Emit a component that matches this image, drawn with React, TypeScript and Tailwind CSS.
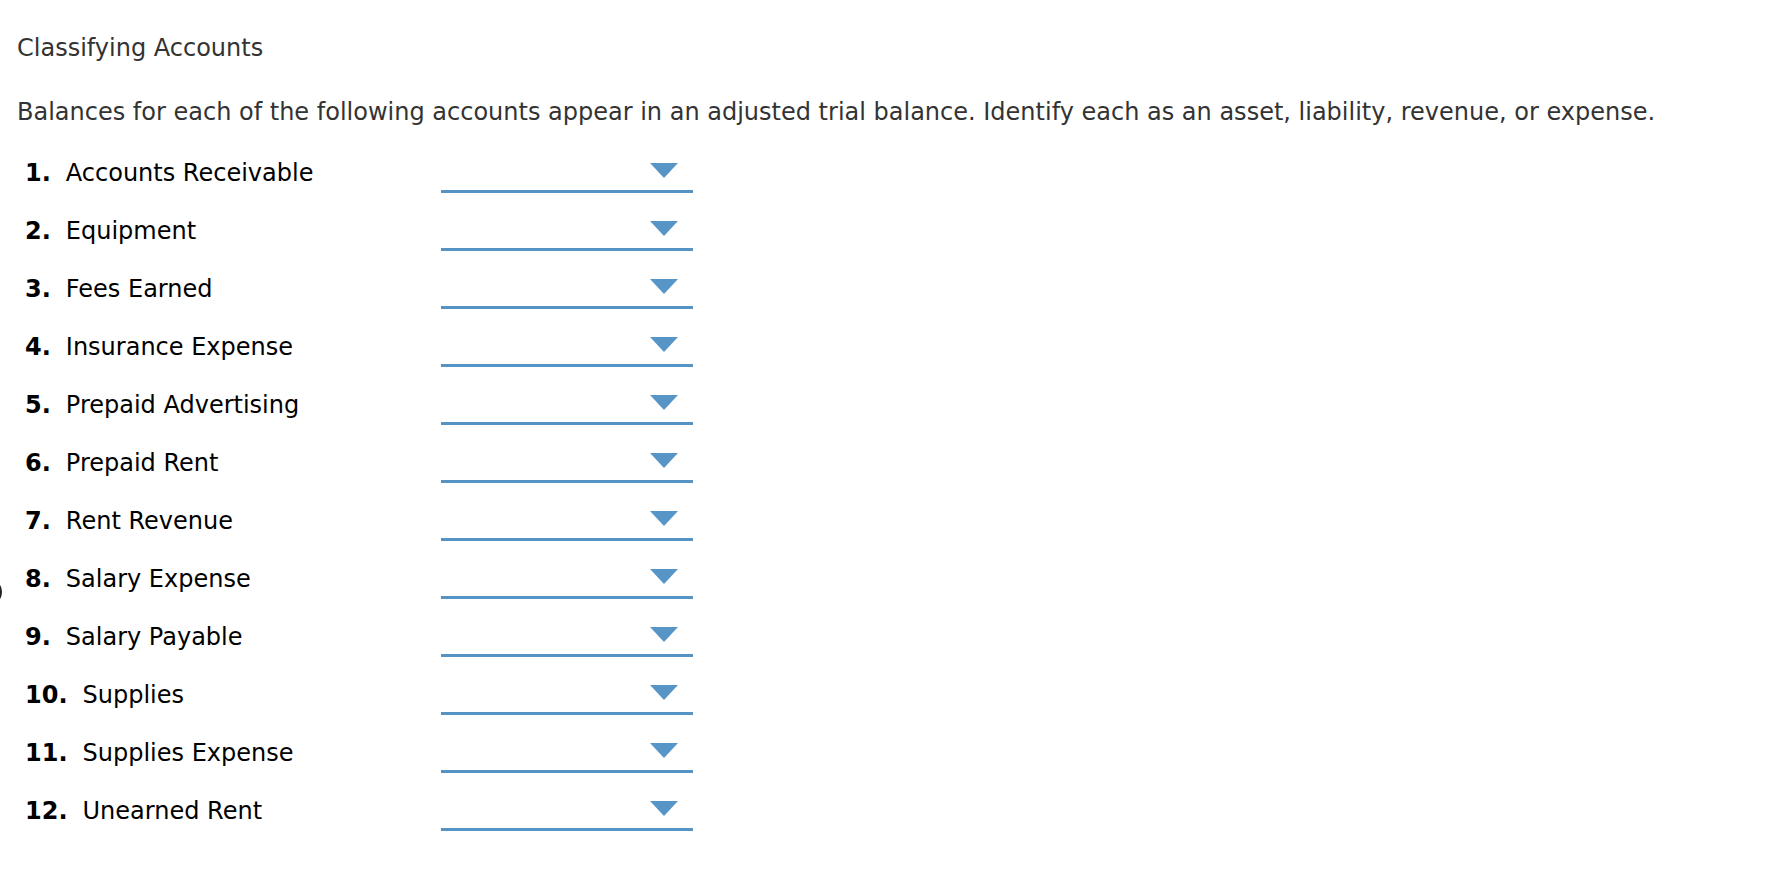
import React from 'react';

const accounts = [
  'Accounts Receivable',
  'Equipment',
  'Fees Earned',
  'Insurance Expense',
  'Prepaid Advertising',
  'Prepaid Rent',
  'Rent Revenue',
  'Salary Expense',
  'Salary Payable',
  'Supplies',
  'Supplies Expense',
  'Unearned Rent',
];

function Dropdown() {
  return (
    <div className="relative w-[252px] h-[36px] border-b-[3px] border-[#5593c5]">
      <svg
        className="absolute right-[15px] top-[6px]"
        width="28"
        height="15"
        viewBox="0 0 28 15"
      >
        <polygon points="0,0 28,0 14,15" fill="#5895c7" />
      </svg>
    </div>
  );
}

export default function App() {
  return (
    <div
      className="relative min-h-screen bg-white pt-[34px] pl-[17px] overflow-hidden"
      style={{ fontFamily: '"DejaVu Sans", Verdana, sans-serif' }}
    >
      {/* cut-off element on the left edge */}
      <div className="absolute left-[-26px] top-[578px] w-[28px] h-[28px] rounded-full border-2 border-[#222]" />

      <div className="text-[24px] leading-[28px] text-[#333]">Classifying Accounts</div>

      <p className="mt-[36px] text-[24px] leading-[28px] text-[#333]">
        Balances for each of the following accounts appear in an adjusted trial balance. Identify each as an asset, liability, revenue, or expense.
      </p>

      <div className="mt-[20px] ml-[8px]">
        {accounts.map((name, i) => (
          <div key={name} className="flex items-center h-[58px]">
            <div className="w-[416px] pb-[4px] text-[24px] leading-[28px] text-black">
              <span className="font-bold mr-[15px]">{i + 1}.</span>
              {name}
            </div>
            <Dropdown />
          </div>
        ))}
      </div>
    </div>
  );
}
